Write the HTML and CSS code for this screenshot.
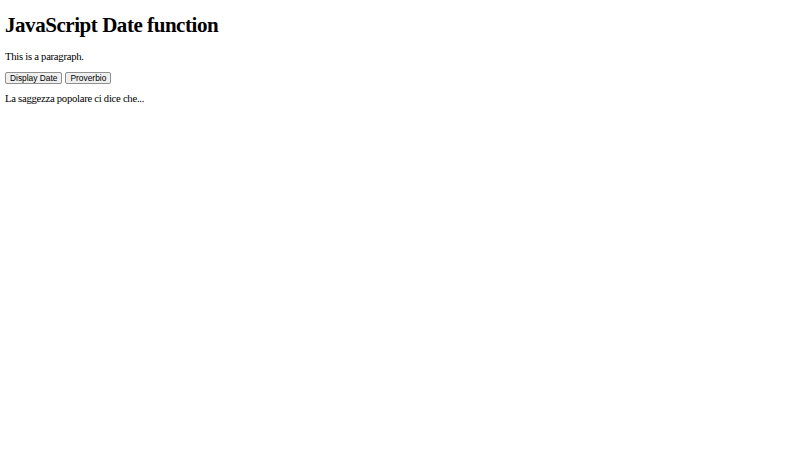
FILE: index.html
```html
<!DOCTYPE html>
<html>
<head>
<meta charset="utf-8">
<title>JavaScript Date function</title>
<link rel="stylesheet" href="styles.css">
</head>
<body class="page">
<h1 class="title">JavaScript Date function</h1>
<p class="para first" id="demo">This is a paragraph.</p>
<div class="buttons">
<button class="btn" type="button">Display Date</button>
<button class="btn" type="button">Proverbio</button>
</div>
<p class="para last">La saggezza popolare ci dice che...</p>
</body>
</html>
```
FILE: styles.css
```css
html { background: #fff; }
.page {
  margin: 0;
  padding: 0 5px;
  font-family: "Liberation Serif", "Times New Roman", serif;
  font-size: 10.67px;
  color: #000;
}
.title {
  font-size: 21px;
  line-height: 24px;
  letter-spacing: -0.45px;
  font-weight: bold;
  margin: 0;
  padding-top: 13.2px;
}
.para {
  margin: 0;
  line-height: 12px;
  letter-spacing: -0.27px;
}
.first {
  padding-top: 13.2px;
}
.buttons {
  display: flex;
  gap: 3px;
  padding-top: 9.2px;
}
.btn {
  font-family: "Liberation Sans", Arial, sans-serif;
  font-size: 8.4px;
  line-height: 10px;
  padding: 0 4px;
  margin: 0;
  border: 1px solid #8f8f8f;
  border-radius: 2px;
  background: #efefef;
  color: #000;
}
.last {
  padding-top: 8.6px;
}
```
